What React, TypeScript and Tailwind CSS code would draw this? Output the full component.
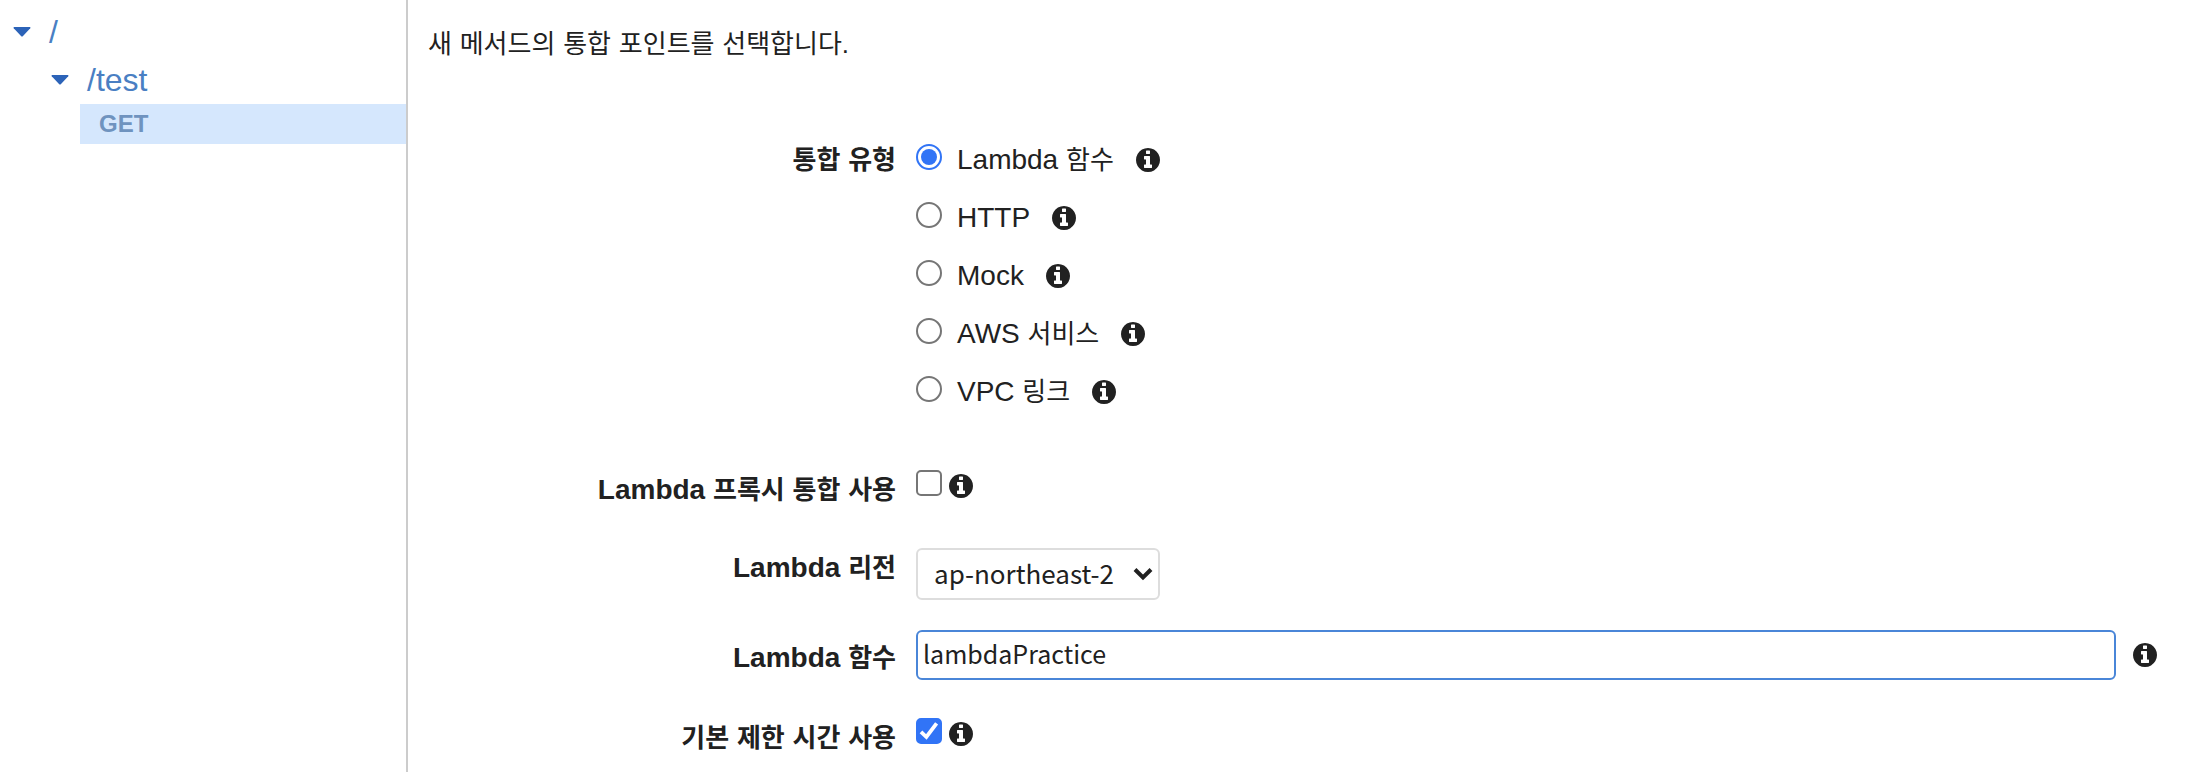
import { useState, type ReactNode } from "react";

const LATIN = "font-['Liberation_Sans','Noto_Sans_CJK_KR',sans-serif]";

function Ko({ children }: { children: ReactNode }) {
  return <span className="text-[26px]">{children}</span>;
}

function InfoButton({ about }: { about: string }) {
  return (
    <button type="button" aria-label={about} className="block shrink-0 text-[#212121]">
      <svg viewBox="0 128 1536 1536" className="block size-6" fill="currentColor" aria-hidden="true">
        <path d="M1024 1376v-160q0-14-9-23t-23-9h-96v-512q0-14-9-23t-23-9h-320q-14 0-23 9t-9 23v160q0 14 9 23t23 9h96v320h-96q-14 0-23 9t-9 23v160q0 14 9 23t23 9h448q14 0 23-9t9-23zm-128-896v-160q0-14-9-23t-23-9h-192q-14 0-23 9t-9 23v160q0 14 9 23t23 9h192q14 0 23-9t9-23zm640 416q0 209-103 385.5t-279.5 279.5-385.5 103-385.5-103-279.5-279.5-103-385.5 103-385.5 279.5-279.5 385.5-103 385.5 103 279.5 279.5 103 385.5z" />
      </svg>
    </button>
  );
}

function Caret() {
  return (
    <svg viewBox="0 0 18 10" className="h-[10px] w-[18px] shrink-0" fill="#2c63b8" aria-hidden="true">
      <path d="M1.2 0h15.6q1 .3.5 1.2L10 9.1q-1 1-2 0L.7 1.2Q.2.3 1.2 0z" />
    </svg>
  );
}

function Checkbox({ id, defaultChecked }: { id: string; defaultChecked?: boolean }) {
  return (
    <span className="grid size-[26px] shrink-0">
      <input
        id={id}
        type="checkbox"
        defaultChecked={defaultChecked}
        className="peer col-start-1 row-start-1 size-[26px] appearance-none rounded-[5px] border-2 border-[#767676] bg-white checked:border-[#3174f6] checked:bg-[#3174f6]"
      />
      <svg
        viewBox="0 0 26 26"
        className="pointer-events-none invisible col-start-1 row-start-1 size-[26px] peer-checked:visible"
        fill="none"
        stroke="#fff"
        strokeWidth="3.8"
        aria-hidden="true"
      >
        <path d="M5 13.8l5.4 5.2L20.6 5.4" />
      </svg>
    </span>
  );
}

const LABEL = "block w-[468px] shrink-0 text-right text-[28px] leading-10 font-bold";

const TYPES: { id: string; about: string; text: ReactNode }[] = [
  { id: "lambda", about: "Lambda 함수 정보", text: <>Lambda <Ko>함수</Ko></> },
  { id: "http", about: "HTTP 정보", text: "HTTP" },
  { id: "mock", about: "Mock 정보", text: "Mock" },
  { id: "aws", about: "AWS 서비스 정보", text: <>AWS <Ko>서비스</Ko></> },
  { id: "vpc", about: "VPC 링크 정보", text: <>VPC <Ko>링크</Ko></> },
];

export default function App() {
  const [type, setType] = useState("lambda");
  const [fn, setFn] = useState("lambdaPractice");

  return (
    <div className={`flex min-h-screen bg-white text-[#212121] ${LATIN}`}>
      <nav className="w-[408px] shrink-0 border-r-2 border-[#ccc] pt-2">
        <a href="#root" className="flex h-12 items-center gap-[18px] pl-[13px] text-[32px] leading-10 text-[#4a7fc3]">
          <Caret />
          <span>/</span>
        </a>
        <a href="#test" className="flex h-12 items-center gap-[18px] pl-[51px] text-[32px] leading-10 text-[#4a7fc3]">
          <Caret />
          <span>/test</span>
        </a>
        <a href="#get" className="ml-20 block bg-[#d5e7fd] pl-[19px] text-2xl leading-10 font-bold text-[#6f93bf]">
          GET
        </a>
      </nav>

      <main className="min-w-0 flex-1 pr-[37px] pl-5">
        <p className="pt-6 text-[28px] leading-10">
          <Ko>새</Ko> <Ko>메서드의</Ko> <Ko>통합</Ko> <Ko>포인트를</Ko> <Ko>선택합니다.</Ko>
        </p>

        <form className="pt-[76px]" onSubmit={(e) => e.preventDefault()}>
          <div role="radiogroup" aria-labelledby="type-label" className="flex gap-5">
            <span id="type-label" className={LABEL}>
              <Ko>통합</Ko> <Ko>유형</Ko>
            </span>
            <div className="flex flex-col gap-[18px]">
              {TYPES.map((t) => (
                <div key={t.id} className="flex h-10 items-center">
                  <input
                    type="radio"
                    id={t.id}
                    name="integration"
                    checked={type === t.id}
                    onChange={() => setType(t.id)}
                    className="mb-[6px] size-[26px] shrink-0 appearance-none rounded-full border-2 border-[#767676] bg-white bg-clip-content p-[3px] checked:border-[#3174f6] checked:bg-[#3174f6]"
                  />
                  <label htmlFor={t.id} className="mr-[22px] ml-[15px] text-[28px] leading-10">
                    {t.text}
                  </label>
                  <InfoButton about={t.about} />
                </div>
              ))}
            </div>
          </div>

          <div className="mt-[58px] flex gap-5">
            <label htmlFor="proxy" className={LABEL}>
              Lambda <Ko>프록시</Ko> <Ko>통합</Ko> <Ko>사용</Ko>
            </label>
            <div className="flex h-7 items-end gap-[7px]">
              <div className="self-start">
                <Checkbox id="proxy" />
              </div>
              <InfoButton about="프록시 통합 정보" />
            </div>
          </div>

          <div className="mt-[38px] flex gap-5">
            <label htmlFor="region" className={LABEL}>
              Lambda <Ko>리전</Ko>
            </label>
            <div className="grid w-[244px] items-center">
              <select
                id="region"
                className="col-start-1 row-start-1 h-[52px] w-full appearance-none rounded-[6px] border-2 border-[#ddd] bg-white pb-[2px] pl-4 font-['Noto_Sans_CJK_KR',sans-serif] text-[26px] leading-10"
              >
                <option>ap-northeast-2</option>
              </select>
              <svg
                viewBox="0 0 20 14"
                className="pointer-events-none col-start-1 row-start-1 mr-[7px] h-[14px] w-5 justify-self-end"
                fill="none"
                stroke="#212121"
                strokeWidth="4"
                aria-hidden="true"
              >
                <path d="M2 2.5l8 8 8-8" />
              </svg>
            </div>
          </div>

          <div className="mt-[30px] flex gap-5">
            <label htmlFor="fn" className={`${LABEL} pt-2`}>
              Lambda <Ko>함수</Ko>
            </label>
            <div className="flex h-[50px] min-w-0 flex-1 items-center gap-[17px]">
              <input
                id="fn"
                type="text"
                value={fn}
                onChange={(e) => setFn(e.target.value)}
                className="h-[50px] min-w-0 flex-1 rounded-[6px] border-2 border-[#4a86d8] bg-white pr-2 pb-1 pl-[5px] font-['Noto_Sans_CJK_KR',sans-serif] text-[25px] leading-10 outline-none"
              />
              <InfoButton about="Lambda 함수 이름 정보" />
            </div>
          </div>

          <div className="mt-[38px] flex gap-5">
            <label htmlFor="timeout" className={LABEL}>
              <Ko>기본</Ko> <Ko>제한</Ko> <Ko>시간</Ko> <Ko>사용</Ko>
            </label>
            <div className="flex h-7 items-end gap-[7px]">
              <div className="self-start">
                <Checkbox id="timeout" defaultChecked />
              </div>
              <InfoButton about="제한 시간 정보" />
            </div>
          </div>
        </form>
      </main>
    </div>
  );
}
